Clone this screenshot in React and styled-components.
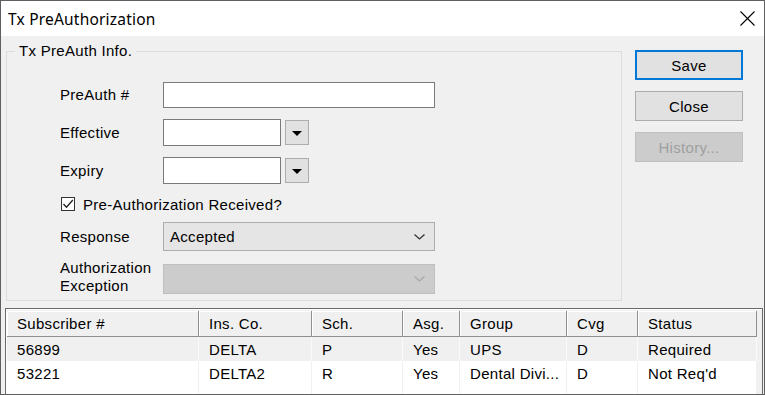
import styled, { createGlobalStyle } from 'styled-components';

const Global = createGlobalStyle`
  html, body {
    margin: 0;
    padding: 0;
    background: #ffffff;
  }
  * {
    box-sizing: border-box;
  }
`;

const Window = styled.div`
  width: 765px;
  height: 395px;
  border: 1px solid #5f5f5f;
  background: #f0f0f0;
  display: flex;
  flex-direction: column;
  overflow: hidden;
  font-family: "Liberation Sans", Arial, sans-serif;
  font-size: 15px;
  letter-spacing: 0.3px;
  color: #000;
`;

const TitleBar = styled.div`
  height: 35px;
  flex: none;
  background: #fff;
  display: flex;
  align-items: center;
  justify-content: space-between;
  padding: 0 9px 0 7px;
`;

const Title = styled.span`
  font-family: "Noto Sans", "Open Sans", sans-serif;
  font-size: 15.5px;
  letter-spacing: 0.2px;
  color: #000;
`;

const CloseX = styled.svg`
  width: 15px;
  height: 15px;
`;

const Client = styled.div`
  flex: 1;
  display: flex;
  flex-direction: column;
  min-height: 0;
`;

const TopArea = styled.div`
  display: flex;
  padding-left: 5px;
`;

const GroupBox = styled.div`
  position: relative;
  margin-top: 15px;
  width: 616px;
  height: 250px;
  border: 1px solid #dcdcdc;
  padding: 0 0 0 53px;
`;

const Legend = styled.span`
  position: absolute;
  top: -10px;
  left: 8px;
  padding: 0 4px;
  background: #f0f0f0;
  line-height: 18px;
`;

const Row = styled.div`
  display: flex;
  align-items: center;
  margin-top: ${p => p.$mt}px;
  height: ${p => p.$h}px;
`;

const Label = styled.div`
  width: 103px;
  flex: none;
  line-height: 18px;
`;

const TallLabel = styled(Label)`
  align-self: flex-start;
  margin-top: -5px;
`;

const TextBox = styled.div`
  width: ${p => p.$w}px;
  height: 100%;
  background: #fff;
  border: 1px solid #7a7a7a;
`;

const DropButton = styled.div`
  width: 24px;
  height: 25px;
  margin-left: 4px;
  background: #e1e1e1;
  border: 1px solid #adadad;
  display: flex;
  align-items: center;
  justify-content: center;
`;

const Arrow = styled.div`
  width: 0;
  height: 0;
  border-left: 5px solid transparent;
  border-right: 5px solid transparent;
  border-top: 5px solid #000;
  margin-top: 1px;
`;

const CheckRow = styled(Row)`
  padding-left: 1px;
  gap: 8px;
`;

const CheckBox = styled.div`
  width: 14px;
  height: 14px;
  border: 1px solid #333;
  background: #fff;
  display: flex;
  align-items: center;
  justify-content: center;
`;

const Combo = styled.div`
  width: 272px;
  height: 100%;
  background: ${p => (p.$disabled ? '#cccccc' : '#e5e5e5')};
  border: 1px solid ${p => (p.$disabled ? '#bfbfbf' : '#adadad')};
  display: flex;
  align-items: center;
  justify-content: space-between;
  padding: 0 9px 0 6px;
`;

const Chevron = ({ color }) => (
  <svg width="11" height="6" viewBox="0 0 11 6">
    <path d="M0.5 0.5 L5.5 5 L10.5 0.5" fill="none" stroke={color} strokeWidth="1.3" />
  </svg>
);

const ButtonColumn = styled.div`
  display: flex;
  flex-direction: column;
  gap: 11px;
  margin: 14px 0 0 13px;
`;

const Button = styled.div`
  width: 108px;
  height: 30px;
  display: flex;
  align-items: center;
  justify-content: center;
  background: ${p => (p.$disabled ? '#cccccc' : '#e1e1e1')};
  border: ${p => (p.$default ? '2px solid #0078d7' : p.$disabled ? '1px solid #bfbfbf' : '1px solid #adadad')};
  color: ${p => (p.$disabled ? '#a0a0a0' : '#000')};
`;

const Grid = styled.div`
  flex: 1;
  margin: 7px 1px 0 4px;
  border: 1px solid #6a6a6a;
  border-bottom: none;
  background: #f0f0f0;
  padding: 2px 0 0 1px;
  box-shadow: inset 1px 1px 0 #fff;
  overflow: hidden;
`;

const GridRow = styled.div`
  display: flex;
  height: ${p => p.$h}px;
`;

const HeaderCell = styled.div`
  width: ${p => p.$w}px;
  flex: none;
  display: flex;
  align-items: center;
  padding-left: 10px;
  background: #f0f0f0;
  border-right: 1px solid #8f8f8f;
  border-bottom: 1px solid #8f8f8f;
  box-shadow: inset 1px 1px 0 #fff;
`;

const Cell = styled.div`
  width: ${p => p.$w}px;
  flex: none;
  display: flex;
  align-items: center;
  padding-left: 10px;
  background: ${p => p.$bg};
  border-right: 1px solid ${p => (p.$bg === '#ffffff' ? '#f0f0f0' : '#fafafa')};
  white-space: nowrap;
`;

const columns = [
  { title: 'Subscriber #', w: 192 },
  { title: 'Ins. Co.', w: 113 },
  { title: 'Sch.', w: 91 },
  { title: 'Asg.', w: 57 },
  { title: 'Group', w: 107 },
  { title: 'Cvg', w: 71 },
  { title: 'Status', w: 119 },
];

const rows = [
  { bg: '#f0f0f0', cells: ['56899', 'DELTA', 'P', 'Yes', 'UPS', 'D', 'Required'] },
  { bg: '#ffffff', cells: ['53221', 'DELTA2', 'R', 'Yes', 'Dental Divi...', 'D', "Not Req'd"] },
  { bg: '#ffffff', cells: ['', '', '', '', '', '', ''] },
];

export default function App() {
  return (
    <>
      <Global />
      <Window>
        <TitleBar>
          <Title>Tx PreAuthorization</Title>
          <CloseX viewBox="0 0 15 15">
            <path d="M0.5 0.5 L14.5 14.5 M14.5 0.5 L0.5 14.5" stroke="#000" strokeWidth="1.1" />
          </CloseX>
        </TitleBar>
        <Client>
          <TopArea>
            <GroupBox>
              <Legend>Tx PreAuth Info.</Legend>
              <Row $mt={30} $h={26}>
                <Label>PreAuth #</Label>
                <TextBox $w={272} />
              </Row>
              <Row $mt={11} $h={27}>
                <Label>Effective</Label>
                <TextBox $w={118} />
                <DropButton><Arrow /></DropButton>
              </Row>
              <Row $mt={11} $h={27}>
                <Label>Expiry</Label>
                <TextBox $w={118} />
                <DropButton><Arrow /></DropButton>
              </Row>
              <CheckRow $mt={12} $h={16}>
                <CheckBox>
                  <svg width="12" height="12" viewBox="0 0 12 12">
                    <path d="M1.5 6 L4.5 9.2 L10.8 2" fill="none" stroke="#222" strokeWidth="1.3" />
                  </svg>
                </CheckBox>
                <span>Pre-Authorization Received?</span>
              </CheckRow>
              <Row $mt={10} $h={29}>
                <Label>Response</Label>
                <Combo>
                  <span>Accepted</span>
                  <Chevron color="#333" />
                </Combo>
              </Row>
              <Row $mt={13} $h={30}>
                <TallLabel>Authorization<br />Exception</TallLabel>
                <Combo $disabled>
                  <span />
                  <Chevron color="#a8a8a8" />
                </Combo>
              </Row>
            </GroupBox>
            <ButtonColumn>
              <Button $default>Save</Button>
              <Button>Close</Button>
              <Button $disabled>History...</Button>
            </ButtonColumn>
          </TopArea>
          <Grid>
            <GridRow $h={26}>
              {columns.map(c => (
                <HeaderCell key={c.title} $w={c.w}>{c.title}</HeaderCell>
              ))}
            </GridRow>
            {rows.map((r, i) => (
              <GridRow key={i} $h={24}>
                {r.cells.map((v, j) => (
                  <Cell key={j} $w={columns[j].w} $bg={r.bg}>{v}</Cell>
                ))}
              </GridRow>
            ))}
          </Grid>
        </Client>
      </Window>
    </>
  );
}
